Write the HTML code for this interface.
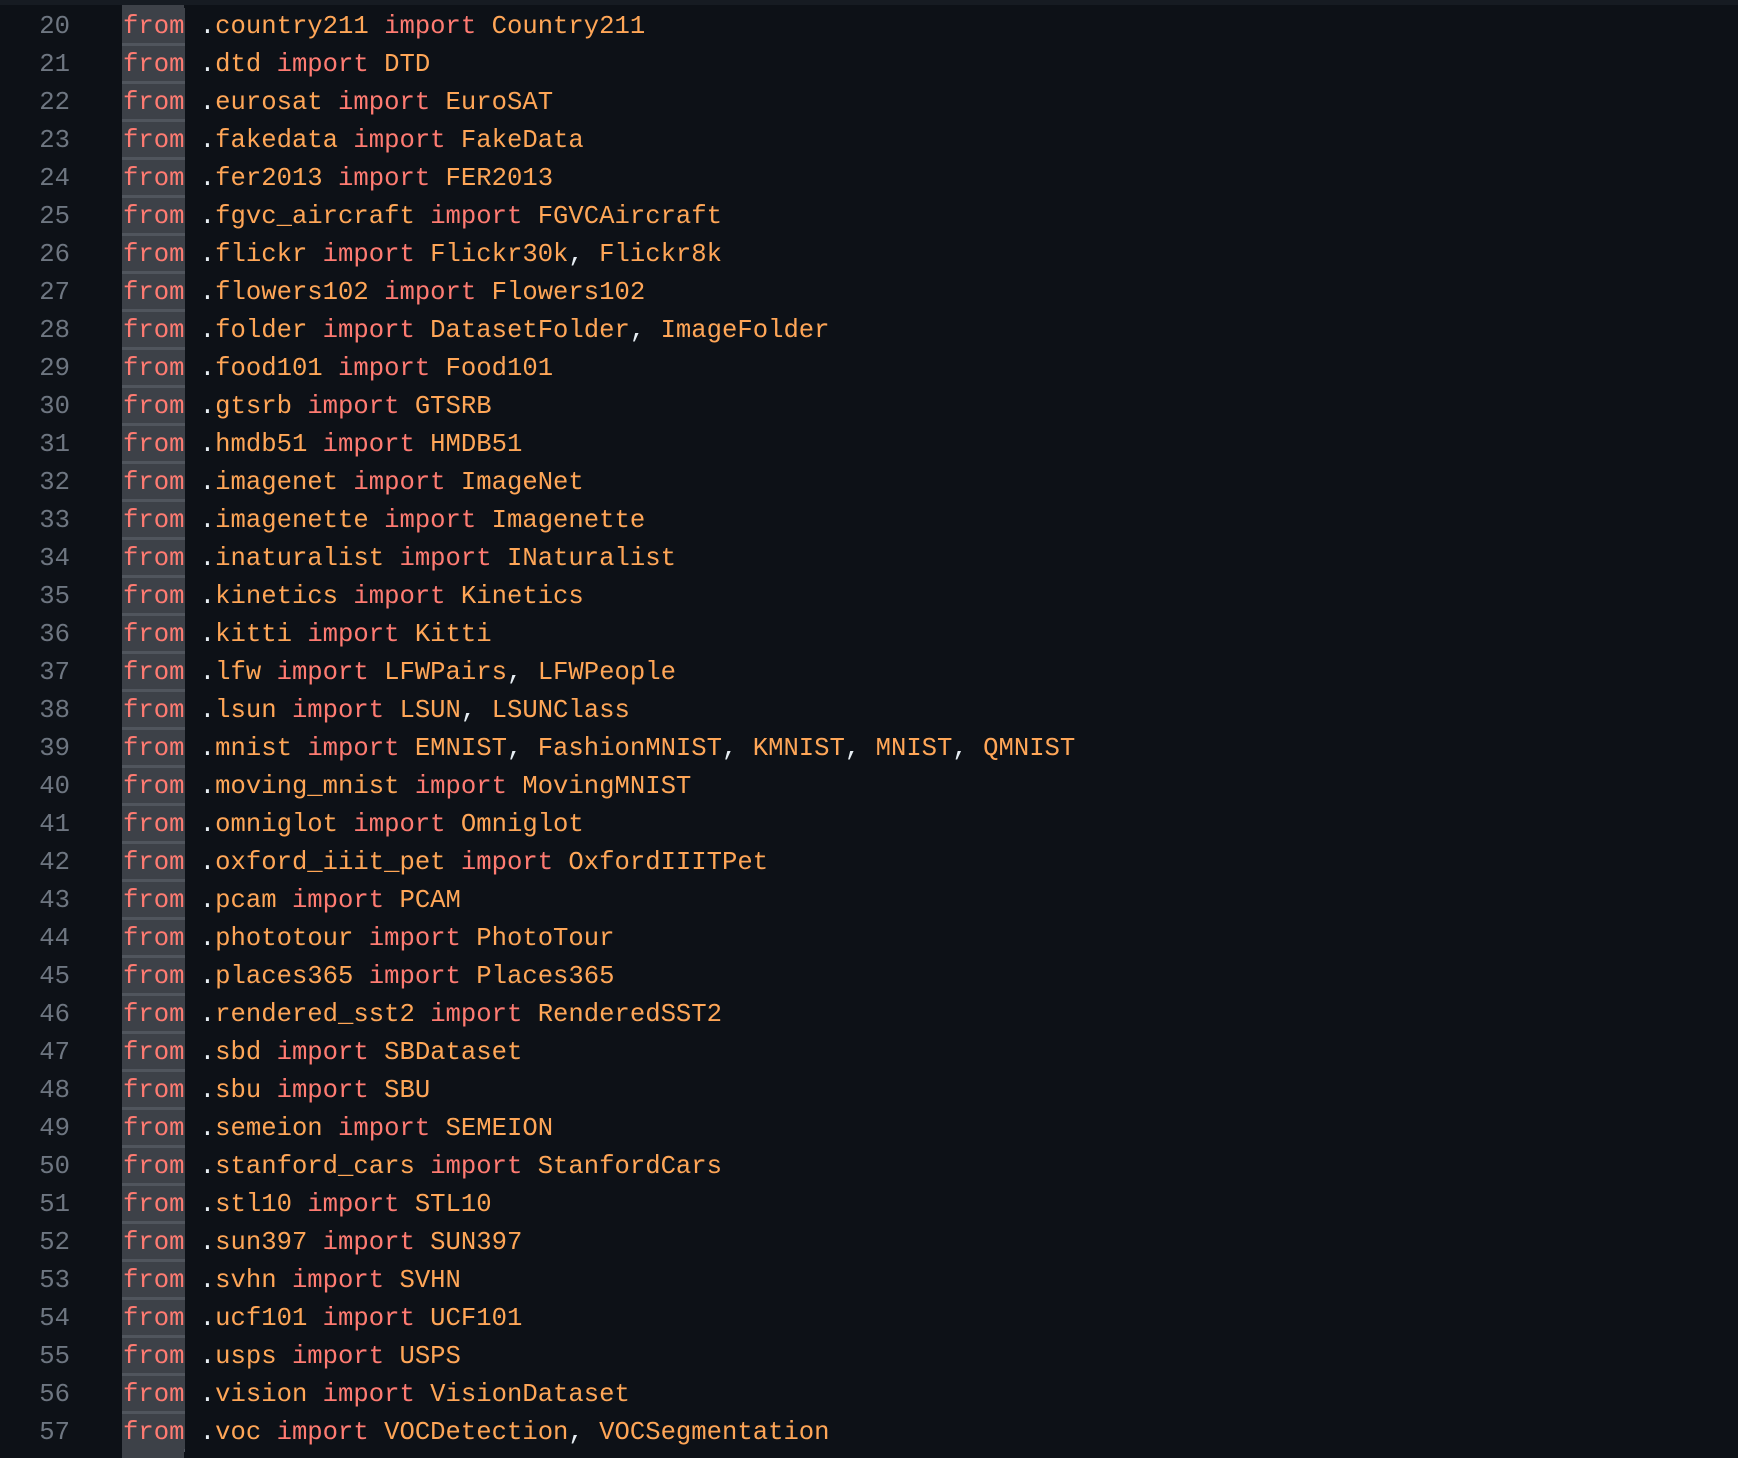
<!DOCTYPE html>
<html><head><meta charset="utf-8"><style>
html,body{margin:0;padding:0;background:#0d1117;width:1738px;height:1458px;overflow:hidden}
.top{position:absolute;left:0;top:0;width:1738px;height:5px;background:#161b22}
.code{position:absolute;left:0;top:8px;font-family:"Liberation Mono",monospace;font-size:25.6px}
.l{height:38px;line-height:38px;white-space:pre;position:relative}
.n{position:absolute;left:0;width:70px;text-align:right;color:#6e7681}
.t{position:absolute;left:123px;color:#ffa657}
.k{color:#ff7b72}
.f{display:inline-block;height:38px;background:#3d4148;box-shadow:inset 0 -3px 0 #50555d;margin-left:-1px;padding-left:1px;padding-right:1px;margin-right:-1px}
.d{color:#e6edf3}
.sel{position:absolute;left:122px;top:1446px;width:62px;height:12px;background:#3d4148}
.sel0{position:absolute;left:122px;top:5px;width:62px;height:3px;background:#3d4148}
</style></head><body>
<div class="top"></div>
<div class="sel0"></div>
<div class="code" id="c">
<div class="l"><span class="n">20</span><span class="t"><span class="k f">from</span> <span class="d">.</span>country211 <span class="k">import</span> Country211</span></div>
<div class="l"><span class="n">21</span><span class="t"><span class="k f">from</span> <span class="d">.</span>dtd <span class="k">import</span> DTD</span></div>
<div class="l"><span class="n">22</span><span class="t"><span class="k f">from</span> <span class="d">.</span>eurosat <span class="k">import</span> EuroSAT</span></div>
<div class="l"><span class="n">23</span><span class="t"><span class="k f">from</span> <span class="d">.</span>fakedata <span class="k">import</span> FakeData</span></div>
<div class="l"><span class="n">24</span><span class="t"><span class="k f">from</span> <span class="d">.</span>fer2013 <span class="k">import</span> FER2013</span></div>
<div class="l"><span class="n">25</span><span class="t"><span class="k f">from</span> <span class="d">.</span>fgvc_aircraft <span class="k">import</span> FGVCAircraft</span></div>
<div class="l"><span class="n">26</span><span class="t"><span class="k f">from</span> <span class="d">.</span>flickr <span class="k">import</span> Flickr30k<span class="d">,</span> Flickr8k</span></div>
<div class="l"><span class="n">27</span><span class="t"><span class="k f">from</span> <span class="d">.</span>flowers102 <span class="k">import</span> Flowers102</span></div>
<div class="l"><span class="n">28</span><span class="t"><span class="k f">from</span> <span class="d">.</span>folder <span class="k">import</span> DatasetFolder<span class="d">,</span> ImageFolder</span></div>
<div class="l"><span class="n">29</span><span class="t"><span class="k f">from</span> <span class="d">.</span>food101 <span class="k">import</span> Food101</span></div>
<div class="l"><span class="n">30</span><span class="t"><span class="k f">from</span> <span class="d">.</span>gtsrb <span class="k">import</span> GTSRB</span></div>
<div class="l"><span class="n">31</span><span class="t"><span class="k f">from</span> <span class="d">.</span>hmdb51 <span class="k">import</span> HMDB51</span></div>
<div class="l"><span class="n">32</span><span class="t"><span class="k f">from</span> <span class="d">.</span>imagenet <span class="k">import</span> ImageNet</span></div>
<div class="l"><span class="n">33</span><span class="t"><span class="k f">from</span> <span class="d">.</span>imagenette <span class="k">import</span> Imagenette</span></div>
<div class="l"><span class="n">34</span><span class="t"><span class="k f">from</span> <span class="d">.</span>inaturalist <span class="k">import</span> INaturalist</span></div>
<div class="l"><span class="n">35</span><span class="t"><span class="k f">from</span> <span class="d">.</span>kinetics <span class="k">import</span> Kinetics</span></div>
<div class="l"><span class="n">36</span><span class="t"><span class="k f">from</span> <span class="d">.</span>kitti <span class="k">import</span> Kitti</span></div>
<div class="l"><span class="n">37</span><span class="t"><span class="k f">from</span> <span class="d">.</span>lfw <span class="k">import</span> LFWPairs<span class="d">,</span> LFWPeople</span></div>
<div class="l"><span class="n">38</span><span class="t"><span class="k f">from</span> <span class="d">.</span>lsun <span class="k">import</span> LSUN<span class="d">,</span> LSUNClass</span></div>
<div class="l"><span class="n">39</span><span class="t"><span class="k f">from</span> <span class="d">.</span>mnist <span class="k">import</span> EMNIST<span class="d">,</span> FashionMNIST<span class="d">,</span> KMNIST<span class="d">,</span> MNIST<span class="d">,</span> QMNIST</span></div>
<div class="l"><span class="n">40</span><span class="t"><span class="k f">from</span> <span class="d">.</span>moving_mnist <span class="k">import</span> MovingMNIST</span></div>
<div class="l"><span class="n">41</span><span class="t"><span class="k f">from</span> <span class="d">.</span>omniglot <span class="k">import</span> Omniglot</span></div>
<div class="l"><span class="n">42</span><span class="t"><span class="k f">from</span> <span class="d">.</span>oxford_iiit_pet <span class="k">import</span> OxfordIIITPet</span></div>
<div class="l"><span class="n">43</span><span class="t"><span class="k f">from</span> <span class="d">.</span>pcam <span class="k">import</span> PCAM</span></div>
<div class="l"><span class="n">44</span><span class="t"><span class="k f">from</span> <span class="d">.</span>phototour <span class="k">import</span> PhotoTour</span></div>
<div class="l"><span class="n">45</span><span class="t"><span class="k f">from</span> <span class="d">.</span>places365 <span class="k">import</span> Places365</span></div>
<div class="l"><span class="n">46</span><span class="t"><span class="k f">from</span> <span class="d">.</span>rendered_sst2 <span class="k">import</span> RenderedSST2</span></div>
<div class="l"><span class="n">47</span><span class="t"><span class="k f">from</span> <span class="d">.</span>sbd <span class="k">import</span> SBDataset</span></div>
<div class="l"><span class="n">48</span><span class="t"><span class="k f">from</span> <span class="d">.</span>sbu <span class="k">import</span> SBU</span></div>
<div class="l"><span class="n">49</span><span class="t"><span class="k f">from</span> <span class="d">.</span>semeion <span class="k">import</span> SEMEION</span></div>
<div class="l"><span class="n">50</span><span class="t"><span class="k f">from</span> <span class="d">.</span>stanford_cars <span class="k">import</span> StanfordCars</span></div>
<div class="l"><span class="n">51</span><span class="t"><span class="k f">from</span> <span class="d">.</span>stl10 <span class="k">import</span> STL10</span></div>
<div class="l"><span class="n">52</span><span class="t"><span class="k f">from</span> <span class="d">.</span>sun397 <span class="k">import</span> SUN397</span></div>
<div class="l"><span class="n">53</span><span class="t"><span class="k f">from</span> <span class="d">.</span>svhn <span class="k">import</span> SVHN</span></div>
<div class="l"><span class="n">54</span><span class="t"><span class="k f">from</span> <span class="d">.</span>ucf101 <span class="k">import</span> UCF101</span></div>
<div class="l"><span class="n">55</span><span class="t"><span class="k f">from</span> <span class="d">.</span>usps <span class="k">import</span> USPS</span></div>
<div class="l"><span class="n">56</span><span class="t"><span class="k f">from</span> <span class="d">.</span>vision <span class="k">import</span> VisionDataset</span></div>
<div class="l"><span class="n">57</span><span class="t"><span class="k f">from</span> <span class="d">.</span>voc <span class="k">import</span> VOCDetection<span class="d">,</span> VOCSegmentation</span></div>
</div>
<div class="sel"></div>
</body></html>
